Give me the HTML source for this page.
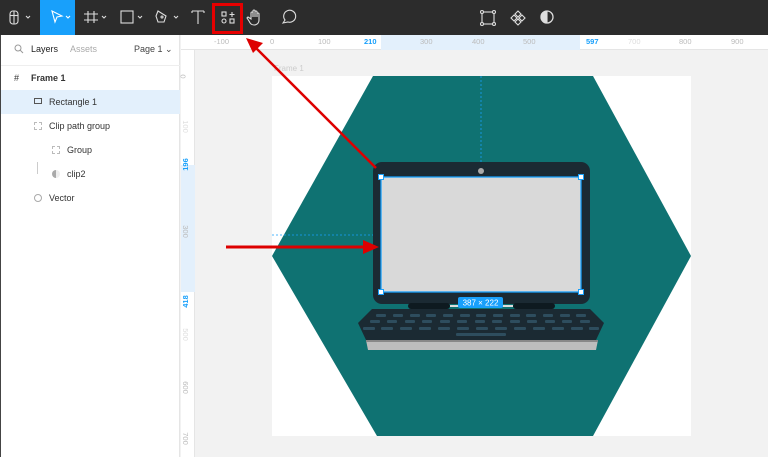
<!DOCTYPE html>
<html><head><style>
*{margin:0;padding:0;box-sizing:border-box}
body{width:768px;height:457px;overflow:hidden;font-family:"Liberation Sans",sans-serif;background:#f2f2f2;position:relative}
.tb{position:absolute;left:0;top:0;width:768px;height:35px;background:#2c2c2c}
.panel{position:absolute;left:0;top:35px;width:180px;height:422px;background:#fff;border-left:1px solid #444;border-right:1px solid #e5e5e5}
.row{position:absolute;left:0;width:179px;height:24px;font-size:9px;color:#333;line-height:24px}
.ab{position:absolute}
.rt{position:absolute;font-size:7.5px;color:#bbb}
</style></head><body>
<div class="tb">
<div class="ab" style="left:40px;top:0;width:35px;height:35px;background:#18a0fb"></div>
<svg class="ab" style="left:0;top:0" width="768" height="35" fill="none" stroke="#ddd" stroke-width="1.1">
<g transform="translate(10,11)"><rect x="0" y="0" width="8" height="13" rx="3"/><line x1="4" y1="0" x2="4" y2="13"/><line x1="0" y1="4.5" x2="8" y2="4.5"/></g>
<path d="M26 16l2 2 2-2"/>
<path d="M52 11l10 5-5 1-2 5z" stroke="#fff"/><path d="M66 16l2 2 2-2" stroke="#fff"/>
<path d="M88 11v12M94 11v12M84 14h14M84 20h14"/><path d="M102 16l2 2 2-2"/>
<rect x="121" y="11" width="12" height="12"/><path d="M138 16l2 2 2-2"/>
<path d="M158 11l8 5-2 6-6 0-2-6z"/><circle cx="162" cy="17" r="1"/><path d="M174 16l2 2 2-2"/>
<path d="M192 11h12M198 11v13M192 11v2M204 11v2"/>
<rect x="222" y="12" width="4" height="4"/><circle cx="224" cy="21" r="2"/><rect x="230" y="19" width="4" height="4"/><path d="M232 12v5M229.5 14.5h5"/>
<path d="M251 19v-6a1 1 0 012 0v4-6a1 1 0 012 0v6-5a1 1 0 012 0v5-3a1 1 0 012 0v6c0 3-2 5-5 5s-4-2-5-4l-2-3 1-1z"/>
<path d="M283 23l2-3a6 6 0 113 2z"/>
<rect x="482" y="12" width="12" height="12"/><circle cx="482" cy="12" r="1.5" fill="#2c2c2c"/><circle cx="494" cy="12" r="1.5" fill="#2c2c2c"/><circle cx="482" cy="24" r="1.5" fill="#2c2c2c"/><circle cx="494" cy="24" r="1.5" fill="#2c2c2c"/>
<path d="M518 11l3 3-3 3-3-3zM518 19l3 3-3 3-3-3zM514 15l3 3-3 3-3-3zM522 15l3 3-3 3-3-3z"/>
<circle cx="547" cy="17" r="6" stroke-width="1.3"/><path d="M547 11a6 6 0 000 12z" fill="#ddd"/>
</svg>
<div class="ab" style="left:212px;top:3px;width:31px;height:31px;border:3px solid #e60000"></div>
</div>
<div class="panel">
<svg class="ab" style="left:13px;top:9px" width="10" height="10" fill="none" stroke="#999"><circle cx="4" cy="4" r="3"/><path d="M6 6l3 3"/></svg>
<div class="ab" style="left:30px;top:9px;font-size:9px;color:#222">Layers</div>
<div class="ab" style="left:69px;top:9px;font-size:9px;color:#aaa">Assets</div>
<div class="ab" style="left:133px;top:9px;font-size:9px;color:#444">Page 1 ⌄</div>
<div class="ab" style="left:0;top:30px;width:179px;height:1px;background:#eee"></div>
<div class="row" style="top:31px"><span class="ab" style="left:13px;color:#333">#</span><span class="ab" style="left:30px;font-weight:bold">Frame 1</span></div>
<div class="row" style="top:55px;background:#e3f0fc"><span class="ab" style="left:33px;top:8px;width:8px;height:6px;border:1px solid #555"></span><span class="ab" style="left:48px">Rectangle 1</span></div>
<div class="row" style="top:79px"><span class="ab" style="left:33px;top:8px;width:8px;height:8px;border:1px dashed #bbb"></span><span class="ab" style="left:48px">Clip path group</span></div>
<div class="row" style="top:103px"><span class="ab" style="left:51px;top:8px;width:8px;height:8px;border:1px dashed #bbb"></span><span class="ab" style="left:66px">Group</span></div>
<div class="row" style="top:127px"><span class="ab" style="left:36px;top:0;width:1px;height:12px;background:#ccc"></span><span class="ab" style="left:51px;top:8px;width:8px;height:8px;border-radius:50%;background:linear-gradient(90deg,#aaa 50%,#eee 50%)"></span><span class="ab" style="left:66px">clip2</span></div>
<div class="row" style="top:151px"><span class="ab" style="left:33px;top:8px;width:8px;height:8px;border-radius:50%;border:1px solid #aaa"></span><span class="ab" style="left:48px">Vector</span></div>
</div>
<!-- rulers -->
<div class="ab" style="left:181px;top:35px;width:587px;height:15px;background:#fff;border-bottom:1px solid #e5e5e5"></div>
<div class="ab" style="left:381px;top:35px;width:199px;height:15px;background:#e3f0fc"></div>
<div class="ab" style="left:181px;top:50px;width:14px;height:407px;background:#fff;border-right:1px solid #e5e5e5"></div>
<div class="ab" style="left:181px;top:165px;width:14px;height:127px;background:#e3f0fc"></div>
<div class="rt" style="left:214px;top:37px">-100</div><div class="rt" style="left:270px;top:37px">0</div><div class="rt" style="left:318px;top:37px">100</div>
<div class="rt" style="left:364px;top:37px;color:#18a0fb;font-weight:bold">210</div>
<div class="rt" style="left:420px;top:37px">300</div><div class="rt" style="left:472px;top:37px">400</div><div class="rt" style="left:523px;top:37px">500</div>
<div class="rt" style="left:586px;top:37px;color:#18a0fb;font-weight:bold">597</div>
<div class="rt" style="left:628px;top:37px;color:#ddd">700</div><div class="rt" style="left:679px;top:37px">800</div><div class="rt" style="left:731px;top:37px">900</div>
<div class="rt" style="left:181px;top:72px;transform:rotate(90deg)">0</div>
<div class="rt" style="left:179px;top:122px;transform:rotate(90deg);color:#ddd">100</div>
<div class="rt" style="left:179px;top:160px;transform:rotate(-90deg);color:#18a0fb;font-weight:bold">196</div>
<div class="rt" style="left:179px;top:227px;transform:rotate(90deg)">300</div>
<div class="rt" style="left:179px;top:297px;transform:rotate(-90deg);color:#18a0fb;font-weight:bold">418</div>
<div class="rt" style="left:179px;top:330px;transform:rotate(90deg);color:#ddd">500</div>
<div class="rt" style="left:179px;top:383px;transform:rotate(90deg)">600</div>
<div class="rt" style="left:179px;top:434px;transform:rotate(90deg)">700</div>
<div class="ab" style="left:274px;top:64px;font-size:8px;color:#ccc">Frame 1</div>
<!-- frame -->
<div class="ab" style="left:272px;top:76px;width:419px;height:360px;background:#fff"></div>
<svg class="ab" style="left:0;top:0" width="768" height="457">
<polygon points="373,76 593,76 691,256 593,436 377,436 272,256" fill="#0f7272"/>
<line x1="481" y1="76" x2="481" y2="170" stroke="#18a0fb" stroke-width="0.8" stroke-dasharray="2,2"/>
<line x1="272" y1="235" x2="381" y2="235" stroke="#18a0fb" stroke-width="0.8" stroke-dasharray="2,2"/>
<rect x="373" y="162" width="217" height="142" rx="9" fill="#1b2a33"/>
<circle cx="481" cy="171" r="3" fill="#aaa"/>
<rect x="381" y="177" width="200" height="115" fill="#d9d9d9" stroke="#18a0fb" stroke-width="1.3"/>
<rect x="408" y="303" width="42" height="6" rx="3" fill="#0e1a20"/><rect x="513" y="303" width="42" height="6" rx="3" fill="#0e1a20"/>
<rect x="450" y="305" width="63" height="2" fill="#ddd"/>
<path d="M372 309h218l14 14-8 17H366l-8-17z" fill="#1b2a33"/>
<g fill="#2e4d5e">
<rect x="376" y="314" width="10" height="3" rx="1"/><rect x="393" y="314" width="10" height="3" rx="1"/><rect x="410" y="314" width="10" height="3" rx="1"/><rect x="426" y="314" width="10" height="3" rx="1"/><rect x="443" y="314" width="10" height="3" rx="1"/><rect x="460" y="314" width="10" height="3" rx="1"/><rect x="476" y="314" width="10" height="3" rx="1"/><rect x="493" y="314" width="10" height="3" rx="1"/><rect x="510" y="314" width="10" height="3" rx="1"/><rect x="526" y="314" width="10" height="3" rx="1"/><rect x="543" y="314" width="10" height="3" rx="1"/><rect x="560" y="314" width="10" height="3" rx="1"/><rect x="576" y="314" width="10" height="3" rx="1"/>
<rect x="370" y="320" width="10" height="3" rx="1"/><rect x="387" y="320" width="10" height="3" rx="1"/><rect x="405" y="320" width="10" height="3" rx="1"/><rect x="422" y="320" width="10" height="3" rx="1"/><rect x="440" y="320" width="10" height="3" rx="1"/><rect x="457" y="320" width="10" height="3" rx="1"/><rect x="475" y="320" width="10" height="3" rx="1"/><rect x="492" y="320" width="10" height="3" rx="1"/><rect x="510" y="320" width="10" height="3" rx="1"/><rect x="527" y="320" width="10" height="3" rx="1"/><rect x="545" y="320" width="10" height="3" rx="1"/><rect x="562" y="320" width="10" height="3" rx="1"/><rect x="580" y="320" width="10" height="3" rx="1"/>
<rect x="363" y="327" width="12" height="3" rx="1"/><rect x="381" y="327" width="12" height="3" rx="1"/><rect x="400" y="327" width="12" height="3" rx="1"/><rect x="419" y="327" width="12" height="3" rx="1"/><rect x="438" y="327" width="12" height="3" rx="1"/><rect x="457" y="327" width="12" height="3" rx="1"/><rect x="476" y="327" width="12" height="3" rx="1"/><rect x="495" y="327" width="12" height="3" rx="1"/><rect x="514" y="327" width="12" height="3" rx="1"/><rect x="533" y="327" width="12" height="3" rx="1"/><rect x="552" y="327" width="12" height="3" rx="1"/><rect x="571" y="327" width="12" height="3" rx="1"/><rect x="589" y="327" width="10" height="3" rx="1"/>
<rect x="456" y="333" width="50" height="3" rx="1"/>
</g>
<path d="M366 340h232l-2 10H368z" fill="#bdbdbd"/><rect x="366" y="340" width="232" height="2" fill="#888"/>
<g fill="#fff" stroke="#18a0fb" stroke-width="1"><rect x="378.5" y="174.5" width="5" height="5"/><rect x="578.5" y="174.5" width="5" height="5"/><rect x="378.5" y="289.5" width="5" height="5"/><rect x="578.5" y="289.5" width="5" height="5"/></g>
<rect x="458" y="297" width="45" height="11" rx="2" fill="#18a0fb"/>
<text x="480.5" y="305.5" font-size="8" fill="#fff" text-anchor="middle" font-family="Liberation Sans">387 × 222</text>
<line x1="376" y1="168" x2="256" y2="48" stroke="#dd0000" stroke-width="2.5"/>
<path d="M246 38l17 5-10 10z" fill="#dd0000"/>
<line x1="226" y1="247" x2="366" y2="247" stroke="#dd0000" stroke-width="3"/>
<path d="M379 247l-16-7v14z" fill="#dd0000"/>
</svg>
</body></html>
